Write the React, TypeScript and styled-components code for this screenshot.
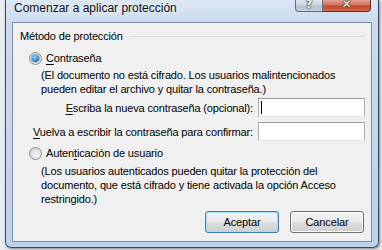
import styled, { createGlobalStyle } from "styled-components";

const GlobalStyle = createGlobalStyle`
  html, body {
    margin: 0;
    padding: 0;
    background: #e9edf1;
  }
  body {
    font-family: "Liberation Sans", Arial, sans-serif;
    font-size: 11px;
    letter-spacing: -0.15px;
    color: #000;
  }
`;

const Page = styled.div`
  width: 382px;
  height: 250px;
  overflow: hidden;
`;

const Window = styled.div`
  margin-left: 5px;
  width: 374px;
  height: 248px;
  box-sizing: border-box;
  border: 1px solid #3d4b5c;
  border-top: none;
  border-radius: 0 0 6px 6px;
  background: linear-gradient(180deg, #dce7f4 0px, #cadbef 22px, #bcd3ec 100%);
  padding: 0 6px 5px 6px;
  box-shadow: 1px 1px 3px rgba(0, 0, 0, 0.45);
  display: flex;
  flex-direction: column;
`;

const TitleBar = styled.div`
  height: 22px;
  display: flex;
  align-items: flex-start;
  justify-content: space-between;
`;

const TitleText = styled.div`
  padding: 1px 0 0 2px;
  line-height: 14px;
  font-size: 12px;
  letter-spacing: 0;
  color: #111;
  text-shadow: 0 0 6px rgba(255, 255, 255, 0.9);
`;

const CaptionButtons = styled.div`
  display: flex;
  margin-right: 1px;
`;

const CaptionButton = styled.div<{ $close?: boolean }>`
  width: ${(p) => (p.$close ? 48 : 28)}px;
  height: 12px;
  box-sizing: border-box;
  border: 1px solid ${(p) => (p.$close ? "#6b2a20" : "#5f6f82")};
  border-top: none;
  border-left: ${(p) => (p.$close ? "none" : "1px solid #5f6f82")};
  border-radius: ${(p) => (p.$close ? "0 0 4px 0" : "0 0 0 4px")};
  background: ${(p) =>
    p.$close
      ? "linear-gradient(180deg, #e2a093 0%, #d1725e 45%, #c2442a 55%, #d66a4c 100%)"
      : "linear-gradient(180deg, #dfe6ee 0%, #cbd5e0 45%, #b4c1d0 55%, #c5d1de 100%)"};
  display: flex;
  align-items: flex-start;
  justify-content: center;
  color: #fff;
  font-family: "DejaVu Sans", sans-serif;
  font-weight: bold;
  font-size: 12px;
  line-height: 9px;
  overflow: hidden;
  text-shadow: 0 0 1px #222, 0 0 1px #222, 0 0 2px #333;
`;

const Client = styled.div`
  flex: 1;
  border: 1px solid #7d8ea4;
  background: #f0f0f0;
  padding: 6px 6px 8px 7px;
  display: flex;
  flex-direction: column;
  white-space: nowrap;
`;

const GroupHeader = styled.div`
  display: flex;
  align-items: center;
  height: 14px;
  line-height: 14px;
`;

const GroupLine = styled.div`
  flex: 1;
  height: 1px;
  background: #d5dfe5;
  margin: 1px 0 0 6px;
`;

const RadioRow = styled.div<{ $top: number }>`
  display: flex;
  align-items: center;
  height: 14px;
  line-height: 14px;
  margin-top: ${(p) => p.$top}px;
  padding-left: 9px;
  gap: 4px;
`;

const RadioCircle = styled.div<{ $checked?: boolean }>`
  width: 13px;
  height: 13px;
  box-sizing: border-box;
  border-radius: 50%;
  border: 1px solid #8a8f95;
  background: radial-gradient(circle at 60% 65%, #f6f6f6 0%, #dcdcdc 60%, #c9c9c9 100%);
  display: flex;
  align-items: center;
  justify-content: center;
  &::after {
    content: "";
    display: ${(p) => (p.$checked ? "block" : "none")};
    width: 7px;
    height: 7px;
    border-radius: 50%;
    background: radial-gradient(circle at 40% 35%, #a9dcff 0%, #3c97da 45%, #134f88 100%);
    box-shadow: 0 0 0 1px rgba(30, 80, 130, 0.35);
  }
`;

const Key = styled.span`
  text-decoration: underline;
  text-underline-offset: 2px;
`;

const Note = styled.div<{ $top: number }>`
  margin-top: ${(p) => p.$top}px;
  padding-left: 21px;
  line-height: 14px;
`;

const FieldRow = styled.div<{ $top: number }>`
  display: flex;
  align-items: center;
  justify-content: flex-end;
  margin-top: ${(p) => p.$top}px;
  gap: 5px;
`;

const FieldBox = styled.div`
  width: 107px;
  height: 19px;
  box-sizing: border-box;
  border: 1px solid #abadb3;
  border-top-color: #9a9ca3;
  border-bottom-color: #e3e9ef;
  background: #fff;
  display: flex;
  align-items: center;
  padding-left: 2px;
`;

const Caret = styled.div`
  width: 1px;
  height: 13px;
  background: #000;
`;

const ButtonBar = styled.div`
  display: flex;
  justify-content: flex-end;
  gap: 11px;
  margin-top: 5px;
  padding-right: 1px;
`;

const Button = styled.div<{ $default?: boolean }>`
  width: 74px;
  height: 22px;
  box-sizing: border-box;
  border-radius: 3px;
  border: 1px solid ${(p) => (p.$default ? "#3c7fb1" : "#707070")};
  background: linear-gradient(180deg, #f2f2f2 0%, #ebebeb 48%, #dddddd 52%, #cfcfcf 100%);
  box-shadow: inset 0 0 0 1px ${(p) => (p.$default ? "#a6dcf5" : "#fcfcfc")};
  display: flex;
  align-items: center;
  justify-content: center;
  line-height: 14px;
`;

export default function App() {
  return (
    <>
      <GlobalStyle />
      <Page>
        <Window>
          <TitleBar>
            <TitleText>Comenzar a aplicar protección</TitleText>
            <CaptionButtons>
              <CaptionButton>?</CaptionButton>
              <CaptionButton $close>✕</CaptionButton>
            </CaptionButtons>
          </TitleBar>
          <Client>
            <GroupHeader>
              Método de protección
              <GroupLine />
            </GroupHeader>
            <RadioRow $top={8}>
              <RadioCircle $checked />
              <span>
                <Key>C</Key>ontraseña
              </span>
            </RadioRow>
            <Note $top={3}>
              (El documento no está cifrado. Los usuarios malintencionados
              <br />
              pueden editar el archivo y quitar la contraseña.)
            </Note>
            <FieldRow $top={2}>
              <span>
                <Key>E</Key>scriba la nueva contraseña (opcional):
              </span>
              <FieldBox>
                <Caret />
              </FieldBox>
            </FieldRow>
            <FieldRow $top={5}>
              <span>
                <Key>V</Key>uelva a escribir la contraseña para confirmar:
              </span>
              <FieldBox />
            </FieldRow>
            <RadioRow $top={5}>
              <RadioCircle />
              <span>
                Auten<Key>t</Key>icación de usuario
              </span>
            </RadioRow>
            <Note $top={4}>
              (Los usuarios autenticados pueden quitar la protección del
              <br />
              documento, que está cifrado y tiene activada la opción Acceso
              <br />
              restringido.)
            </Note>
            <ButtonBar>
              <Button $default>Aceptar</Button>
              <Button>Cancelar</Button>
            </ButtonBar>
          </Client>
        </Window>
      </Page>
    </>
  );
}
